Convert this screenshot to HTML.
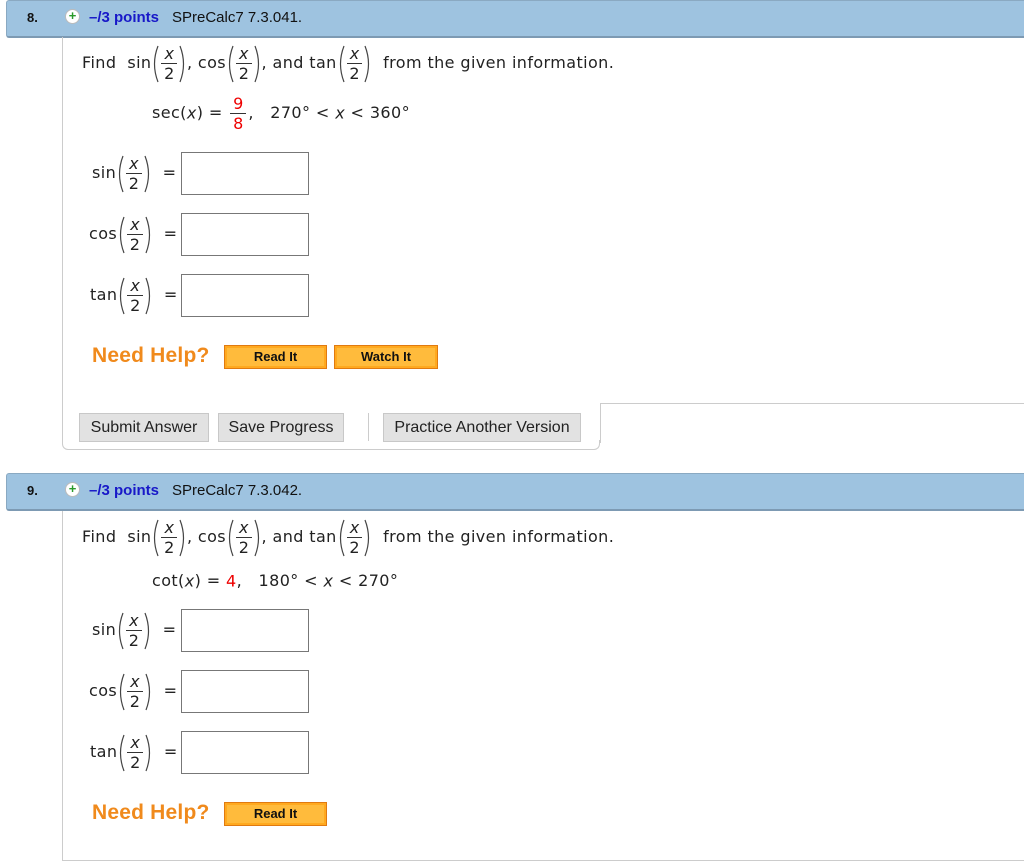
<!DOCTYPE html>
<html><head><meta charset="utf-8"><style>
body{margin:0;width:1024px;height:868px;background:#fff;position:relative;overflow:hidden;font-family:"DejaVu Sans",sans-serif;color:#222}
.a{position:absolute}
.hdr{position:absolute;left:6px;right:-10px;height:35px;background:#9ec3e0;border:1px solid #8aa9c2;border-bottom:2px solid #7d9ab3;border-radius:3px 0 0 3px;font-family:"Liberation Sans",sans-serif;font-size:15px}
.hdr .n{position:absolute;left:20px;top:9px;font-weight:bold;font-size:13px;color:#111}
.hdr .pl{position:absolute;left:58px;top:8px;width:13px;height:13px;border-radius:50%;background:#fff;border:1px solid #bbb;color:#2a9a2a;font-weight:bold;font-size:13px;line-height:12px;text-align:center}
.hdr .pt{position:absolute;left:82px;top:8px;color:#1818c8;font-weight:bold}
.hdr .id{position:absolute;left:165px;top:8px;color:#111}
.m{font-size:16px;white-space:pre;height:40px;line-height:40px;letter-spacing:0.4px}
.m>*{vertical-align:middle}
.fr{display:inline-flex;flex-direction:column;align-items:center;font-size:16px;line-height:17px;margin:0 2px;letter-spacing:0}
.fr i{border-bottom:1px solid #333;padding:0 3px 1px;font-style:italic}
.fr span{padding-top:1px}
svg.p{width:8px;height:38px}
.box{position:absolute;width:126px;height:41px;border:1px solid #777;background:#fff}
.nh{position:absolute;font-family:"Liberation Sans",sans-serif;font-weight:bold;font-size:21px;color:#f08a1c;letter-spacing:0.2px}
.ob{position:absolute;height:22px;border:1px solid #e07a10;background:#ffbb3c;box-shadow:inset 0 0 0 2px #ffa91f;font-family:"Liberation Sans",sans-serif;font-weight:bold;font-size:13px;text-align:center;line-height:22px;color:#111}
.gb{position:absolute;top:413px;height:27px;background:#e2e2e2;border:1px solid #c8c8c8;font-family:"Liberation Sans",sans-serif;font-size:16px;line-height:27px;text-align:center;color:#222}
</style></head><body>
<div class="hdr" style="top:0"><span class="n">8.</span><span class="pl">+</span><span class="pt">–/3 points</span><span class="id">SPreCalc7 7.3.041.</span></div>
<div class="a" style="left:62px;top:37px;width:1px;height:404px;background:#ccc"></div>
<div class="a" style="left:62px;top:440px;width:538px;height:10px;border-left:1px solid #ccc;border-bottom:1px solid #ccc;border-right:1px solid #ccc;border-radius:0 0 6px 6px;box-sizing:border-box"></div>
<div class="a" style="left:600px;top:403px;width:1px;height:40px;background:#ccc"></div>
<div class="a" style="left:600px;top:403px;width:424px;height:1px;background:#ccc"></div>

<div class="hdr" style="top:473px"><span class="n">9.</span><span class="pl">+</span><span class="pt">–/3 points</span><span class="id">SPreCalc7 7.3.042.</span></div>
<div class="a" style="left:62px;top:511px;width:1px;height:350px;background:#ccc"></div>
<div class="a" style="left:62px;top:860px;width:962px;height:1px;background:#ccc"></div>

<!-- Problem 8 -->
<div class="a m" style="left:82px;top:43px">Find  sin<svg class="p"><path d="M7 1Q0 19 7 37" fill="none" stroke="#444" stroke-width="1.2"/></svg><span class="fr"><i>x</i><span>2</span></span><svg class="p"><path d="M1 1Q8 19 1 37" fill="none" stroke="#444" stroke-width="1.2"/></svg>, cos<svg class="p"><path d="M7 1Q0 19 7 37" fill="none" stroke="#444" stroke-width="1.2"/></svg><span class="fr"><i>x</i><span>2</span></span><svg class="p"><path d="M1 1Q8 19 1 37" fill="none" stroke="#444" stroke-width="1.2"/></svg>, and tan<svg class="p"><path d="M7 1Q0 19 7 37" fill="none" stroke="#444" stroke-width="1.2"/></svg><span class="fr"><i>x</i><span>2</span></span><svg class="p"><path d="M1 1Q8 19 1 37" fill="none" stroke="#444" stroke-width="1.2"/></svg>  from the given information.</div>
<div class="a m" style="left:152px;top:93px">sec(<i>x</i>) = <span class="fr" style="color:#e00"><i style="font-style:normal;border-color:#333">9</i><span>8</span></span>,   270° &lt; <i>x</i> &lt; 360°</div>

<div class="a m" style="left:92px;top:153px">sin<svg class="p"><path d="M7 1Q0 19 7 37" fill="none" stroke="#444" stroke-width="1.2"/></svg><span class="fr"><i>x</i><span>2</span></span><svg class="p"><path d="M1 1Q8 19 1 37" fill="none" stroke="#444" stroke-width="1.2"/></svg>  =</div>
<div class="box" style="left:181px;top:152px"></div>
<div class="a m" style="left:89px;top:214px">cos<svg class="p"><path d="M7 1Q0 19 7 37" fill="none" stroke="#444" stroke-width="1.2"/></svg><span class="fr"><i>x</i><span>2</span></span><svg class="p"><path d="M1 1Q8 19 1 37" fill="none" stroke="#444" stroke-width="1.2"/></svg>  =</div>
<div class="box" style="left:181px;top:213px"></div>
<div class="a m" style="left:90px;top:275px">tan<svg class="p"><path d="M7 1Q0 19 7 37" fill="none" stroke="#444" stroke-width="1.2"/></svg><span class="fr"><i>x</i><span>2</span></span><svg class="p"><path d="M1 1Q8 19 1 37" fill="none" stroke="#444" stroke-width="1.2"/></svg>  =</div>
<div class="box" style="left:181px;top:274px"></div>

<div class="nh" style="left:92px;top:344px">Need Help?</div>
<div class="ob" style="left:224px;top:345px;width:101px">Read It</div>
<div class="ob" style="left:334px;top:345px;width:102px">Watch It</div>

<div class="gb" style="left:79px;width:128px">Submit Answer</div>
<div class="gb" style="left:218px;width:124px">Save Progress</div>
<div class="a" style="left:368px;top:413px;width:1px;height:28px;background:#ccc"></div>
<div class="gb" style="left:383px;width:196px">Practice Another Version</div>

<!-- Problem 9 -->
<div class="a m" style="left:82px;top:517px">Find  sin<svg class="p"><path d="M7 1Q0 19 7 37" fill="none" stroke="#444" stroke-width="1.2"/></svg><span class="fr"><i>x</i><span>2</span></span><svg class="p"><path d="M1 1Q8 19 1 37" fill="none" stroke="#444" stroke-width="1.2"/></svg>, cos<svg class="p"><path d="M7 1Q0 19 7 37" fill="none" stroke="#444" stroke-width="1.2"/></svg><span class="fr"><i>x</i><span>2</span></span><svg class="p"><path d="M1 1Q8 19 1 37" fill="none" stroke="#444" stroke-width="1.2"/></svg>, and tan<svg class="p"><path d="M7 1Q0 19 7 37" fill="none" stroke="#444" stroke-width="1.2"/></svg><span class="fr"><i>x</i><span>2</span></span><svg class="p"><path d="M1 1Q8 19 1 37" fill="none" stroke="#444" stroke-width="1.2"/></svg>  from the given information.</div>
<div class="a m" style="left:152px;top:561px">cot(<i>x</i>) = <span style="color:#e00">4</span>,   180° &lt; <i>x</i> &lt; 270°</div>

<div class="a m" style="left:92px;top:610px">sin<svg class="p"><path d="M7 1Q0 19 7 37" fill="none" stroke="#444" stroke-width="1.2"/></svg><span class="fr"><i>x</i><span>2</span></span><svg class="p"><path d="M1 1Q8 19 1 37" fill="none" stroke="#444" stroke-width="1.2"/></svg>  =</div>
<div class="box" style="left:181px;top:609px"></div>
<div class="a m" style="left:89px;top:671px">cos<svg class="p"><path d="M7 1Q0 19 7 37" fill="none" stroke="#444" stroke-width="1.2"/></svg><span class="fr"><i>x</i><span>2</span></span><svg class="p"><path d="M1 1Q8 19 1 37" fill="none" stroke="#444" stroke-width="1.2"/></svg>  =</div>
<div class="box" style="left:181px;top:670px"></div>
<div class="a m" style="left:90px;top:732px">tan<svg class="p"><path d="M7 1Q0 19 7 37" fill="none" stroke="#444" stroke-width="1.2"/></svg><span class="fr"><i>x</i><span>2</span></span><svg class="p"><path d="M1 1Q8 19 1 37" fill="none" stroke="#444" stroke-width="1.2"/></svg>  =</div>
<div class="box" style="left:181px;top:731px"></div>

<div class="nh" style="left:92px;top:801px">Need Help?</div>
<div class="ob" style="left:224px;top:802px;width:101px">Read It</div>
</body></html>
